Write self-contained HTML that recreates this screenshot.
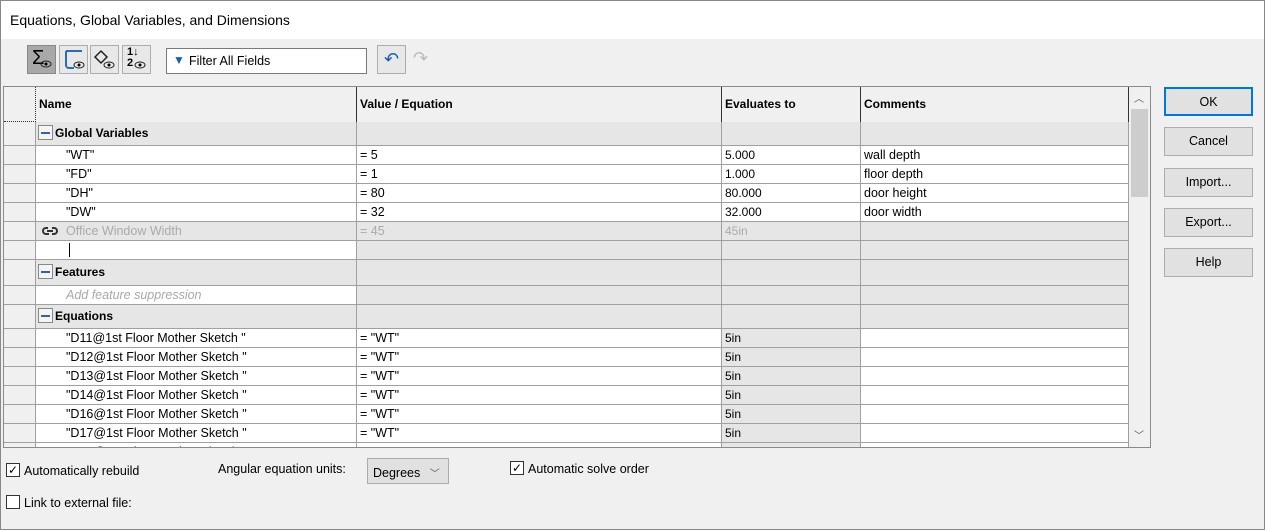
<!DOCTYPE html>
<html><head><style>
*{box-sizing:border-box;margin:0;padding:0}
body{width:1265px;height:530px;background:#f0f0f0;font-family:"Liberation Sans",Arial,sans-serif;font-size:12px;color:#000;position:relative;overflow:hidden;border:1px solid #888}
.a{position:absolute}
.title{left:0;top:0;width:1263px;height:38px;background:#fff;font-size:14px;padding:11px 9px}
.tb{top:44px;width:29px;height:29px;border:1px solid #adadad;background:#e8e8e8}
.grid{left:2px;top:85px;width:1148px;height:362px;background:#fff;border:1px solid #8a8a8a;overflow:hidden}
.r{position:absolute;left:0;width:1125px;border-bottom:1px solid #a0a0a0}
.c{position:absolute;top:0;height:100%;border-right:1px solid #a0a0a0;white-space:nowrap;overflow:hidden;padding-left:3px;line-height:18px}
.btn{left:1163px;width:89px;height:29px;border:1px solid #adadad;background:#e1e1e1;text-align:center;line-height:27px;font-size:12.5px}
.minus{display:inline-block;width:15px;height:15px;border:1px solid #888;background:#f4f4f4;vertical-align:-3px;margin-right:2px;position:relative}
.minus:after{content:"";position:absolute;left:2px;top:6px;width:9px;height:2px;background:#3c5ea8}
.cb{width:14px;height:14px;border:1px solid #333;background:#fff;font-size:12px;line-height:12px;text-align:center}
</style></head><body>
<div class="a title">Equations, Global Variables, and Dimensions</div>

<div class="a tb" style="left:26px;background:#a8a8a8;border-color:#888"><span style="font-size:20px;position:absolute;left:4px;top:1px">Σ</span><svg class="a" style="left:11px;top:13px" width="14" height="10"><ellipse cx="7" cy="5" rx="5" ry="3" fill="none" stroke="#222"/><circle cx="7" cy="5" r="1.5"/></svg></div>
<div class="a tb" style="left:58px"><svg width="27" height="27"><path d="M6 5v14a3 3 0 0 0 3 3h5" stroke="#2a6db0" stroke-width="2" fill="none"/><path d="M6 5h16" stroke="#2a6db0" stroke-width="2"/><ellipse cx="19" cy="19" rx="5" ry="3" fill="none" stroke="#222"/><circle cx="19" cy="19" r="1.5"/></svg></div>
<div class="a tb" style="left:89px"><svg width="27" height="27"><path d="M4 11l6-6 6 6-6 6z" fill="none" stroke="#222" stroke-width="1.5"/><ellipse cx="18" cy="19" rx="5" ry="3" fill="none" stroke="#222"/><circle cx="18" cy="19" r="1.5"/></svg></div>
<div class="a tb" style="left:121px"><span style="position:absolute;left:4px;top:1px;font-weight:bold;font-size:11px;line-height:11px">1↓<br>2</span><svg class="a" style="left:10px;top:14px" width="14" height="10"><ellipse cx="7" cy="5" rx="5" ry="3" fill="none" stroke="#222"/><circle cx="7" cy="5" r="1.5"/></svg></div>
<div class="a" style="left:165px;top:47px;width:201px;height:26px;background:#fff;border:1px solid #7a7a7a;padding:5px 0 0 22px;font-size:12.5px"><span class="a" style="left:6px;top:4px;color:#1a5fb4;font-size:12px">▼</span>Filter All Fields</div>
<div class="a tb" style="left:376px;top:44px;background:#e8e8e8;color:#1a5fb4;font-size:18px;text-align:center;line-height:26px">↶</div>
<div class="a" style="left:412px;top:47px;color:#bbb;font-size:18px">↷</div>

<div class="a grid">
<div class="r" style="top:0;height:36px;background:#f0f0f0;border-bottom:1px solid #333">
 <div class="c" style="left:0;width:32px;border-right:1px dotted #333;border-bottom:1px dotted #333"></div>
 <div class="c" style="left:32px;width:321px;font-weight:bold;line-height:34px;border-right-color:#333">Name</div>
 <div class="c" style="left:353px;width:365px;font-weight:bold;line-height:34px;border-right-color:#333">Value / Equation</div>
 <div class="c" style="left:718px;width:139px;font-weight:bold;line-height:34px;border-right-color:#333">Evaluates to</div>
 <div class="c" style="left:857px;width:268px;font-weight:bold;line-height:34px;border-right-color:#333">Comments</div>
</div>
<div id="rows"></div>
<div class="a" style="left:1125px;top:0;width:22px;height:362px;background:#f0f0f0"><div class="a" style="left:5px;top:3px;font-size:10px;color:#555">︿</div><div class="a" style="left:2px;top:22px;width:17px;height:88px;background:#cdcdcd"></div><div class="a" style="left:5px;top:340px;font-size:10px;color:#555">﹀</div></div>
</div>

<div class="a btn" style="top:86px;border:2px solid #0078d7">OK</div>
<div class="a btn" style="top:126px">Cancel</div>
<div class="a btn" style="top:167px">Import...</div>
<div class="a btn" style="top:207px">Export...</div>
<div class="a btn" style="top:247px">Help</div>

<div class="a cb" style="left:5px;top:462px">✓</div><div class="a" style="left:23px;top:463px;font-size:12.5px">Automatically rebuild</div>
<div class="a" style="left:217px;top:461px;font-size:12.5px">Angular equation units:</div>
<div class="a" style="left:366px;top:457px;width:82px;height:26px;background:#e1e1e1;border:1px solid #adadad;padding:6px 0 0 5px;font-size:12.5px">Degrees <span style="color:#555;margin-left:6px;font-size:10px">﹀</span></div>
<div class="a cb" style="left:509px;top:460px">✓</div><div class="a" style="left:527px;top:461px;font-size:12.5px">Automatic solve order</div>
<div class="a cb" style="left:5px;top:494px"></div><div class="a" style="left:23px;top:495px;font-size:12.5px">Link to external file:</div>

<script>
var rows=[
['g',35,24,'Global Variables'],
['d',59,19,'"WT"','= 5','5.000','wall depth'],
['d',78,19,'"FD"','= 1','1.000','floor depth'],
['d',97,19,'"DH"','= 80','80.000','door height'],
['d',116,19,'"DW"','= 32','32.000','door width'],
['o',135,19,'Office Window Width','= 45','45in',''],
['e',154,19],
['g',173,26,'Features'],
['a',199,19],
['g',218,24,'Equations']];
var n=['D11','D12','D13','D14','D16','D17','D18'];
for(var i=0;i<n.length;i++)rows.push(['q',242+19*i,19,'"'+n[i]+'@1st Floor Mother Sketch "','= "WT"','5in','']);
var link='<svg class="a" style="left:5px;top:3px" width="18" height="12"><path d="M7 3H5a3 3 0 0 0 0 6h3M11 3h2a3 3 0 0 1 0 6h-2M6 6h6" stroke="#333" stroke-width="2" fill="none"/></svg>';
var h='';
rows.forEach(function(r){
 var t=r[0],bg=(t=='g'||t=='o')?'#e6e6e6':'#fff';
 h+='<div class="r" style="top:'+r[1]+'px;height:'+r[2]+'px;background:'+bg+'">';
 h+='<div class="c" style="left:0;width:32px;background:#f0f0f0"></div>';
 var lh='line-height:'+(r[2]-1)+'px;';
 if(t=='g'){h+='<div class="c" style="left:32px;width:321px;font-weight:bold;'+lh+'padding-left:2px"><span class="minus"></span>'+r[3]+'</div>';
  h+='<div class="c" style="left:353px;width:365px"></div><div class="c" style="left:718px;width:139px"></div><div class="c" style="left:857px;width:268px"></div>';}
 else if(t=='e'){h+='<div class="c" style="left:32px;width:321px"><div class="a" style="left:33px;top:2px;width:1px;height:14px;background:#000"></div></div><div class="c" style="left:353px;width:365px;background:#e6e6e6"></div><div class="c" style="left:718px;width:139px;background:#e6e6e6"></div><div class="c" style="left:857px;width:268px;background:#e6e6e6"></div>';}
 else if(t=='a'){h+='<div class="c" style="left:32px;width:321px;padding-left:30px;font-style:italic;color:#a8a8a8;font-size:12.5px">Add feature suppression</div><div class="c" style="left:353px;width:365px;background:#e6e6e6"></div><div class="c" style="left:718px;width:139px;background:#e6e6e6"></div><div class="c" style="left:857px;width:268px;background:#e6e6e6"></div>';}
 else{var gr=t=='o'?'color:#aaa;':'';
  h+='<div class="c" style="left:32px;width:321px;padding-left:30px;font-size:12.5px;'+gr+'">'+(t=='o'?link:'')+r[3]+'</div>';
  h+='<div class="c" style="left:353px;width:365px;font-size:12.5px;'+gr+'">'+r[4]+'</div>';
  h+='<div class="c" style="left:718px;width:139px;'+gr+(t=='q'?'background:#e6e6e6;':'')+'">'+r[5]+'</div>';
  h+='<div class="c" style="left:857px;width:268px;font-size:12.5px">'+r[6]+'</div>';}
 h+='</div>';});
document.getElementById('rows').innerHTML=h;
</script>
</body></html>
